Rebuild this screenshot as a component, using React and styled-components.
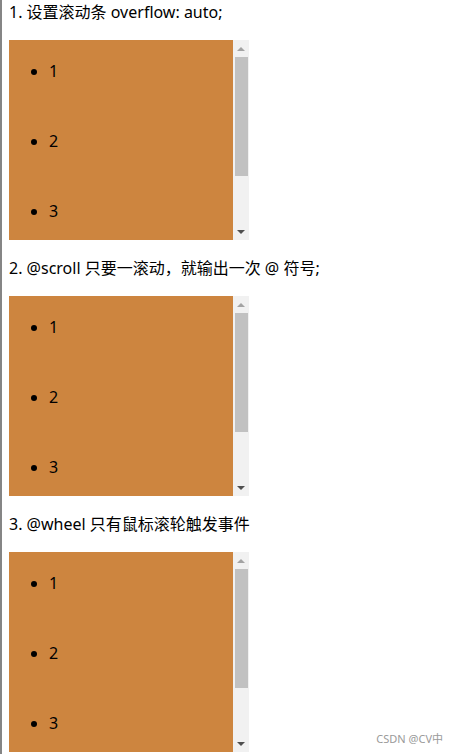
import React from "react";
import styled, { createGlobalStyle } from "styled-components";

const GlobalStyle = createGlobalStyle`
  html, body {
    margin: 0;
    padding: 0;
    background: #ffffff;
  }
  body {
    font-family: "Noto Sans", "Noto Sans CJK SC", sans-serif;
    color: #000000;
  }
`;

const Page = styled.div`
  position: relative;
  min-height: 754px;
  box-sizing: border-box;
  border-left: 2px solid #858585;
  padding-left: 7px;
`;

const Title = styled.p`
  margin: 16px 0;
  font-size: 16px;
  line-height: 24px;
  &:first-child {
    margin-top: 0;
  }
`;

const ScrollBox = styled.div`
  display: flex;
  width: 240px;
  height: 200px;
  background: #cd853f;
`;

const Viewport = styled.div`
  flex: 1;
  overflow: hidden;
`;

const Track = styled.div`
  width: 16px;
  display: flex;
  flex-direction: column;
  background: #f1f1f1;
`;

const Arrow = styled.div`
  height: 17px;
  display: flex;
  align-items: center;
  justify-content: center;
  svg {
    display: block;
  }
`;

const Rail = styled.div`
  flex: 1;
`;

const Thumb = styled.div`
  margin: 0 1px 0 2px;
  background: #c1c1c1;
`;

const List = styled.ul`
  margin: 0;
  padding: 20px 0 49px 40px;
  list-style: disc;
`;

const Item = styled.li`
  font-size: 16px;
  line-height: 22px;
  margin-bottom: 48px;
  &:last-child {
    margin-bottom: 0;
  }
`;

const Watermark = styled.span`
  position: absolute;
  right: 14px;
  bottom: 8px;
  font-size: 11px;
  color: #9a9a9a;
`;

function ScrollBar({ ratio }) {
  return (
    <Track>
      <Arrow>
        <svg width="8" height="4" viewBox="0 0 8 4">
          <polygon points="0,4 8,4 4,0" fill="#a3a3a3" />
        </svg>
      </Arrow>
      <Rail>
        <Thumb style={{ height: `${ratio * 100}%` }} />
      </Rail>
      <Arrow>
        <svg width="8" height="4" viewBox="0 0 8 4">
          <polygon points="0,0 8,0 4,4" fill="#505050" />
        </svg>
      </Arrow>
    </Track>
  );
}

const sections = [
  "1. 设置滚动条 overflow: auto;",
  "2. @scroll 只要一滚动，就输出一次 @ 符号;",
  "3. @wheel 只有鼠标滚轮触发事件",
];

const items = [1, 2, 3];

export default function App() {
  return (
    <Page>
      <GlobalStyle />
      {sections.map((title) => (
        <React.Fragment key={title}>
          <Title>{title}</Title>
          <ScrollBox>
            <Viewport>
              <List>
                {items.map((n) => (
                  <Item key={n}>{n}</Item>
                ))}
              </List>
            </Viewport>
            <ScrollBar ratio={200 / 279} />
          </ScrollBox>
        </React.Fragment>
      ))}
      <Watermark>CSDN @CV中</Watermark>
    </Page>
  );
}
